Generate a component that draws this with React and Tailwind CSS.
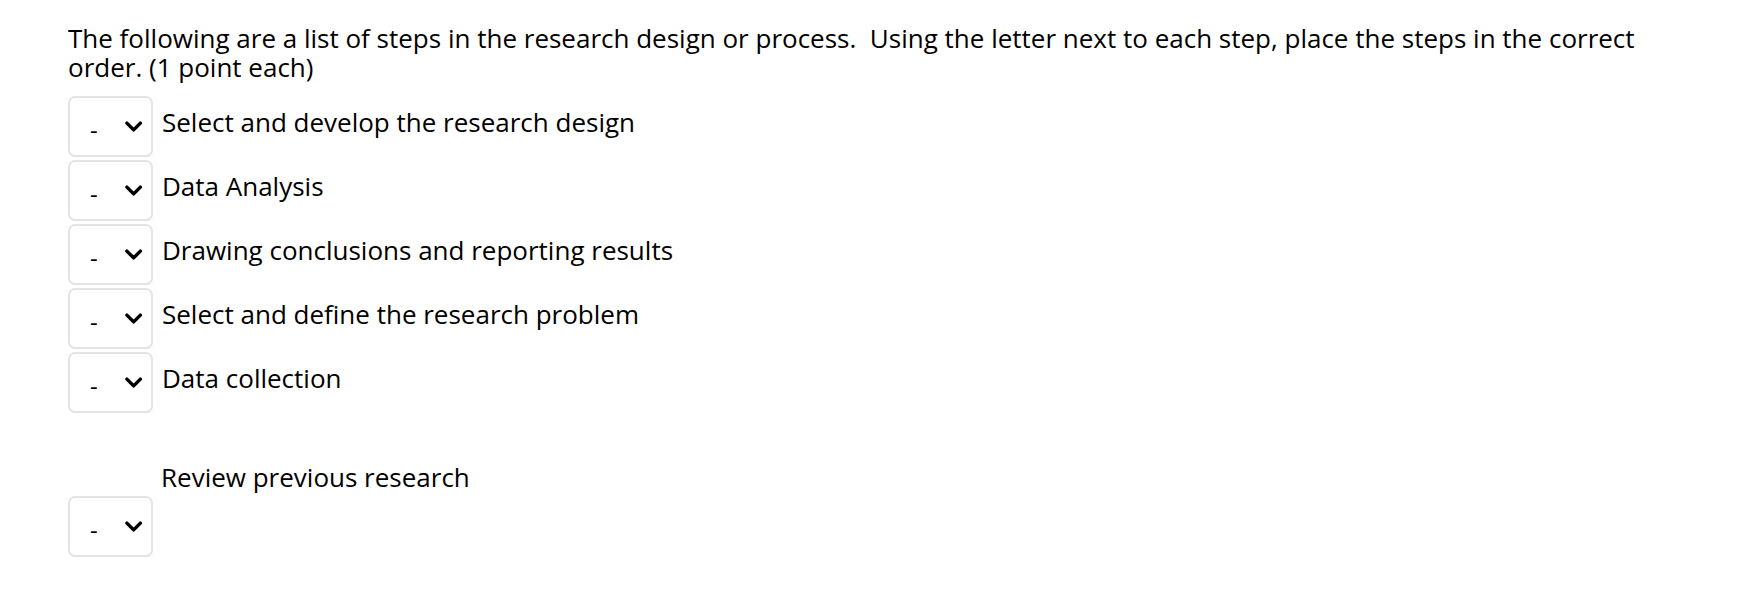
import React from "react";

function Chevron() {
  return (
    <svg width="20" height="13" viewBox="0 0 20 13" className="block">
      <path d="M3 3 L10 10 L17 3" fill="none" stroke="#000" strokeWidth="3.6" strokeLinecap="round" strokeLinejoin="round" />
    </svg>
  );
}

function SelectBox() {
  return (
    <div className="w-[85px] h-[61px] shrink-0 rounded-[7px] border-2 border-[#e4e4e4] bg-white flex items-center pl-[20px] pr-[8px]">
      <span className="text-[24px] leading-none text-black w-[35px] pt-[6px]">-</span>
      <Chevron />
    </div>
  );
}

function Row({ label }) {
  return (
    <div className="flex items-start gap-[9px] mb-[3px]">
      <SelectBox />
      <div className="pt-[11px] text-[26px] leading-[30px] text-black">{label}</div>
    </div>
  );
}

export default function App() {
  const items = [
    "Select and develop the research design",
    "Data Analysis",
    "Drawing conclusions and reporting results",
    "Select and define the research problem",
    "Data collection",
  ];
  return (
    <div className="w-[1742px] h-[610px] bg-white" style={{ fontFamily: '"Open Sans", "Noto Sans", sans-serif' }}>
      <div className="pl-[68px] pr-[70px] pt-[24px]">
        <p className="text-[26px] leading-[29px] text-black mb-[14px]">
          The following are a list of steps in the research design or process.&nbsp; Using the letter next to each step, place the steps in the correct order. (1 point each)
        </p>
        {items.map((t) => (
          <Row key={t} label={t} />
        ))}
        <div className="pl-[93px] pt-[46px] text-[26px] leading-[30px] text-black">Review previous research</div>
        <div className="mt-[4px]">
          <SelectBox />
        </div>
      </div>
    </div>
  );
}
